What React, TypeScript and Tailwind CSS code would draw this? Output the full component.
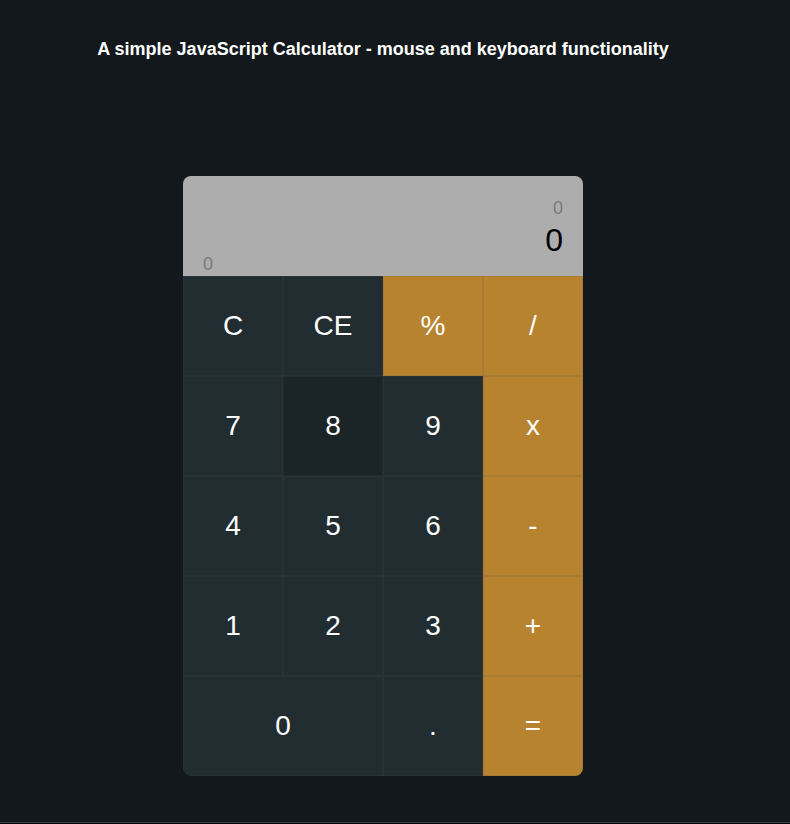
const keys = [
  { label: 'C', kind: 'dark' },
  { label: 'CE', kind: 'dark' },
  { label: '%', kind: 'op' },
  { label: '/', kind: 'op' },
  { label: '7', kind: 'dark' },
  { label: '8', kind: 'hover' },
  { label: '9', kind: 'dark' },
  { label: 'x', kind: 'op' },
  { label: '4', kind: 'dark' },
  { label: '5', kind: 'dark' },
  { label: '6', kind: 'dark' },
  { label: '-', kind: 'op' },
  { label: '1', kind: 'dark' },
  { label: '2', kind: 'dark' },
  { label: '3', kind: 'dark' },
  { label: '+', kind: 'op' },
  { label: '0', kind: 'dark', wide: true },
  { label: '.', kind: 'dark' },
  { label: '=', kind: 'op' },
];

const bg: Record<string, string> = {
  dark: 'bg-[#222d32]',
  hover: 'bg-[#1b2427]',
  op: 'bg-[#b8832f]',
};

export default function App() {
  return (
    <div className="h-[824px] bg-black" style={{ fontFamily: '"Liberation Sans", Arial, sans-serif' }}>
      <div className="h-[823px] border-b border-[#3d4447] bg-[#12181b]">
        <div className="w-[766px] flex flex-col items-center">
          <h1 className="mt-[39px] text-[18px] leading-[21px] font-bold text-white text-center">
            A simple JavaScript Calculator - mouse and keyboard functionality
          </h1>

          <div className="mt-[116px] w-[400px] rounded-lg overflow-hidden">
            <div className="h-[100px] bg-[#adadad] flex justify-between">
              <div className="self-end pl-[20px] pb-[1px] text-[18px] leading-[21px] text-[#7a7a7a]">0</div>
              <div className="flex flex-col items-end pt-[22px] pr-[20px]">
                <div className="text-[18px] leading-[21px] text-[#7a7a7a]">0</div>
                <div className="mt-[3px] text-[32px] leading-[37px] text-black">0</div>
              </div>
            </div>

            <div className="grid grid-cols-4">
              {keys.map((k) => (
                <button
                  key={k.label}
                  className={`h-[100px] flex items-center justify-center border border-[#565656]/15 text-[28px] text-white ${bg[k.kind]} ${k.wide ? 'col-span-2' : ''}`}
                >
                  {k.label}
                </button>
              ))}
            </div>
          </div>
        </div>
      </div>
    </div>
  );
}
